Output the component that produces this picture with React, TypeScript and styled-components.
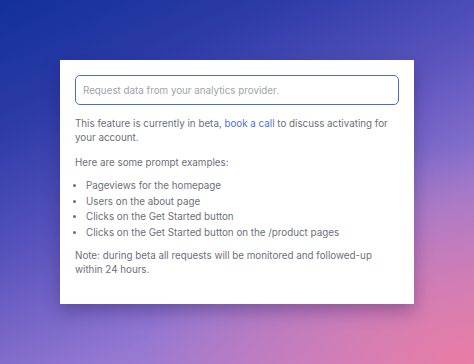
import React from "react";
import styled, { createGlobalStyle } from "styled-components";

const Global = createGlobalStyle`
  html, body { margin: 0; padding: 0; }
  body {
    width: 474px;
    height: 364px;
    overflow: hidden;
    font-family: Inter, "Noto Sans", sans-serif;
  }
`;

const Backdrop = styled.div`
  width: 474px;
  height: 364px;
  box-sizing: border-box;
  padding: 60px 60px 0 60px;
  background:
    radial-gradient(ellipse 70% 60% at 100% 100%, rgba(234, 124, 162, 0.95) 0%, rgba(234, 124, 162, 0) 100%),
    linear-gradient(155deg, #12309a 0%, #2c3ba8 22%, #5a54bd 45%, #9478d2 70%, #c685d0 100%);
`;

const Card = styled.div`
  width: 354px;
  height: 244px;
  box-sizing: border-box;
  background: #ffffff;
  padding: 15px;
  box-shadow: 0 7px 16px rgba(40, 20, 90, 0.35);
  display: flex;
  flex-direction: column;
`;

const Input = styled.input`
  box-sizing: border-box;
  width: 324px;
  height: 30px;
  border: 1.5px solid #4a6ad8;
  border-radius: 5px;
  padding: 0 7px;
  font-family: inherit;
  font-size: 9.8px;
  color: #333;
  outline: none;
  &::placeholder { color: #9ea3ab; }
`;

const Text = styled.p<{ $mt: number }>`
  margin: ${(p) => p.$mt}px 0 0 0;
  font-size: 9.8px;
  line-height: 14px;
  color: #6b7079;
`;

const Link = styled.a`
  color: #4f70d9;
  text-decoration: none;
`;

const List = styled.ul`
  margin: 8px 0 0 0;
  padding: 0 0 0 11px;
  font-size: 9.8px;
  line-height: 15.5px;
  color: #6b7079;
  li::marker { font-size: 9px; }
`;

export default function App() {
  return (
    <>
      <Global />
      <Backdrop>
        <Card>
          <Input placeholder="Request data from your analytics provider." />
          <Text $mt={12}>
            This feature is currently in beta, <Link href="#">book a call</Link> to discuss activating for your account.
          </Text>
          <Text $mt={11}>Here are some prompt examples:</Text>
          <List>
            <li>Pageviews for the homepage</li>
            <li>Users on the about page</li>
            <li>Clicks on the Get Started button</li>
            <li>Clicks on the Get Started button on the /product pages</li>
          </List>
          <Text $mt={9}>
            Note: during beta all requests will be monitored and followed-up within 24 hours.
          </Text>
        </Card>
      </Backdrop>
    </>
  );
}
